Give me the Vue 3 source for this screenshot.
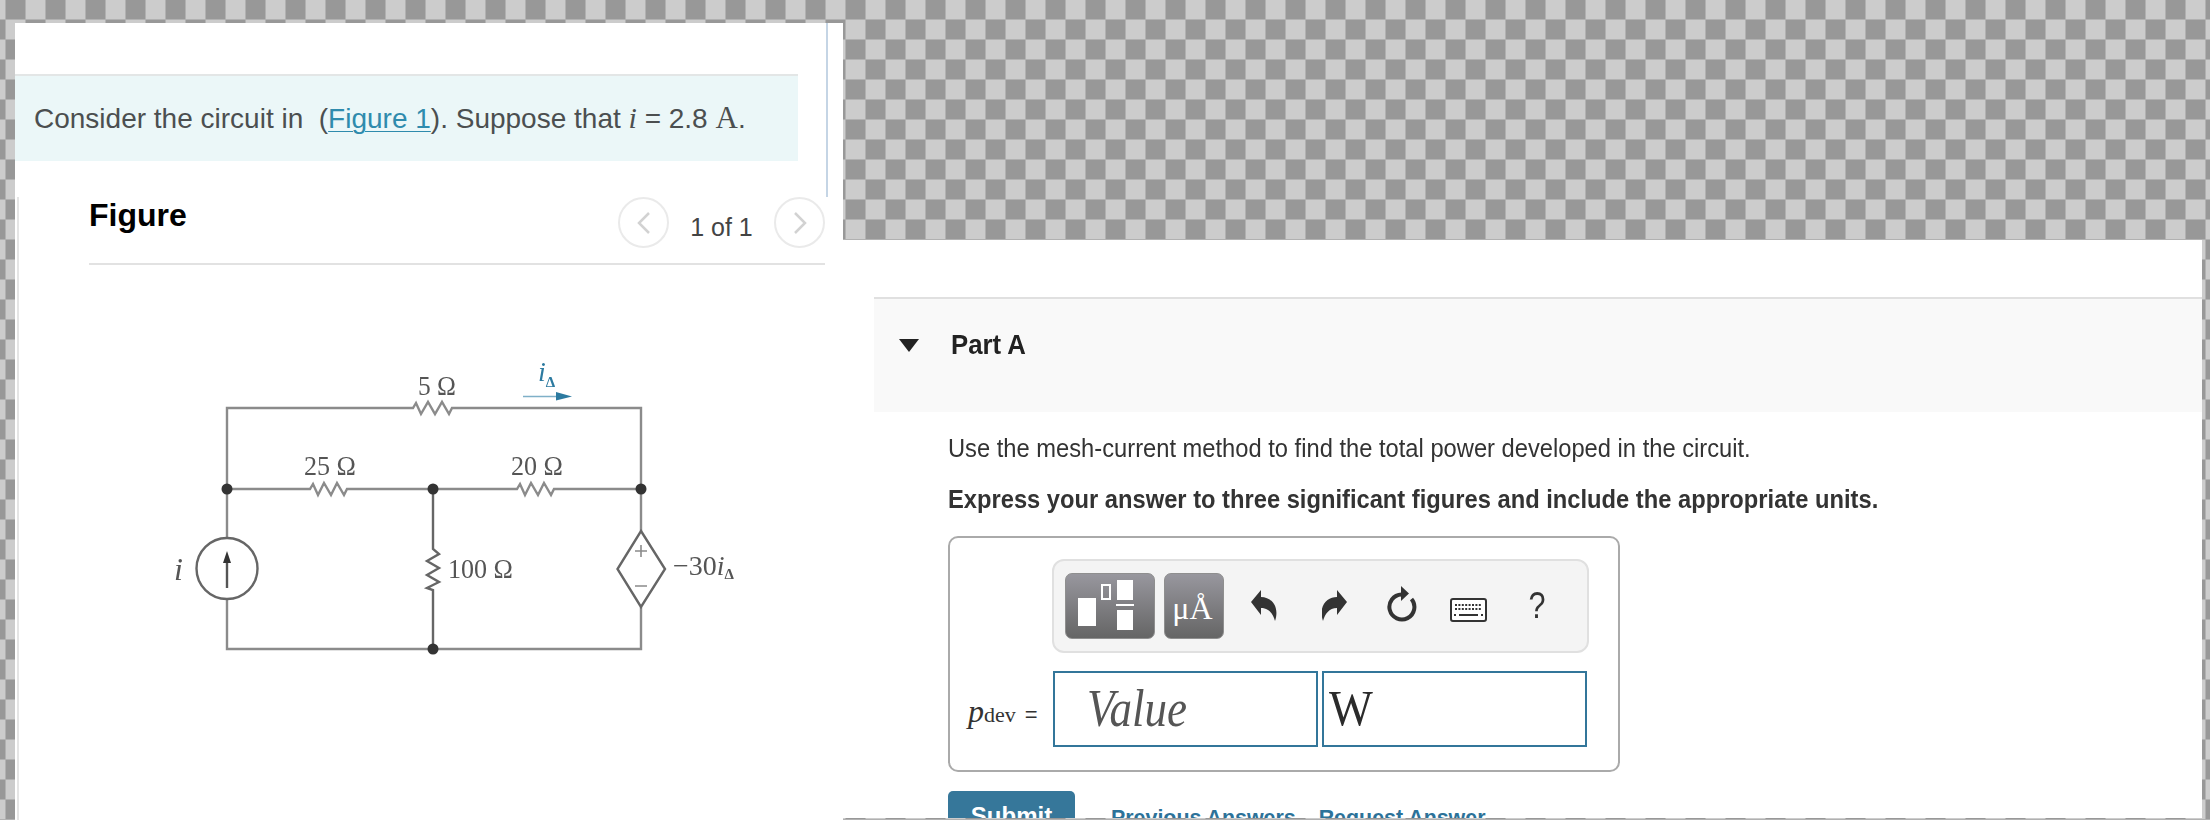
<template>
  <div class="canvas">
    <!-- problem statement -->
    <section class="sheet sheet-intro">
      <div class="intro-band">
        <p>
          Consider the circuit in&nbsp; (<a class="fig-link">Figure 1</a>). Suppose that
          <i class="math math-i">i</i> = 2.8 <span class="math math-a">A</span>.
        </p>
      </div>
    </section>

    <!-- figure -->
    <section class="sheet sheet-figure">
      <header class="fig-head">
        <h2>Figure</h2>
        <div class="pager">
          <span class="round-btn">
            <svg width="14" height="24" viewBox="0 0 14 24"><path d="M12 2 2 12l10 10" /></svg>
          </span>
          <span class="pager-text">1 of 1</span>
          <span class="round-btn">
            <svg width="14" height="24" viewBox="0 0 14 24"><path d="M2 2l10 10L2 22" /></svg>
          </span>
        </div>
      </header>
      <svg class="circuit" width="600" height="340" viewBox="140 340 600 340">
        <g fill="none" stroke="#8b8b8b" stroke-width="2.4">
          <path d="M227 538V408H413l3-5 5 11 7-12 7 12 7-12 7 12 3-6H641V531" />
          <path d="M227 489H310l3-5 5 11 6-12 7 12 6-12 7 12 3-6H517l3-5 5 11 6-12 7 12 6-12 7 12 3-6H641" />
          <path d="M433 489V549l6 5-12 7 12 7-12 7 12 7-12 6 6 2V649" stroke="#666" />
          <path d="M227 599V649H641V607" />
          <circle cx="227" cy="568.5" r="30.5" stroke="#666" />
          <path d="M641 531 665 569 641 607 617.500 569Z" stroke="#666" />
          <path d="M227 588V560" stroke="#555" />
          <path d="M635 551H647M641 545V557M635 586H647" stroke-width="1.6" />
        </g>
        <path d="M227 551l-4 12h8z" fill="#333" />
        <g fill="#333">
          <circle cx="227" cy="489" r="5.5" />
          <circle cx="433" cy="489" r="5.5" />
          <circle cx="641" cy="489" r="5.5" />
          <circle cx="433" cy="649" r="5.5" />
        </g>
        <g class="ckt-label">
          <text x="418" y="395" textLength="38" lengthAdjust="spacingAndGlyphs">5 Ω</text>
          <text x="304" y="475" textLength="52" lengthAdjust="spacingAndGlyphs">25 Ω</text>
          <text x="511" y="475" textLength="52" lengthAdjust="spacingAndGlyphs">20 Ω</text>
          <text x="448" y="578" textLength="65" lengthAdjust="spacingAndGlyphs">100 Ω</text>
          <text x="174" y="580" class="ckt-i">i</text>
          <text x="673" y="575">−30<tspan font-style="italic">i</tspan><tspan font-size="15" font-weight="bold" dy="4">Δ</tspan></text>
        </g>
        <text x="538" y="381" class="ckt-blue"><tspan font-style="italic">i</tspan><tspan font-size="15" font-weight="bold" dy="6">Δ</tspan></text>
        <path d="M523 396.500H560" stroke="#7fb0c8" stroke-width="1.6" />
        <path d="M556 392l16 4.500-16 4z" fill="#2c7aa0" />
      </svg>
    </section>

    <!-- part A -->
    <section class="sheet sheet-part">
      <div class="part-band">
        <span class="caret"></span>
        <h3>Part A</h3>
      </div>
      <div class="part-body">
        <p class="prompt">Use the mesh-current method to find the total power developed in the circuit.</p>
        <p class="prompt prompt-bold">Express your answer to three significant figures and include the appropriate units.</p>

        <div class="answer-box">
          <div class="toolbar">
            <button class="tool tool-wide">
              <svg width="90" height="66" viewBox="0 0 90 66">
                <rect x="13" y="25" width="18" height="28" fill="#fff" />
                <rect x="37" y="12" width="8" height="14" fill="none" stroke="#fff" stroke-width="2" />
                <rect x="52" y="7" width="16" height="20" fill="#fff" />
                <rect x="51" y="31" width="18" height="2" fill="#fff" />
                <rect x="52" y="37" width="16" height="20" fill="#fff" />
              </svg>
            </button>
            <button class="tool tool-unit">μÅ</button>
            <svg class="ico ico-undo" width="27" height="32" viewBox="0 0 27 32">
              <path d="M0 12 10 0V7C20 7 29 16 24 31 22 24 18 18 10 18V25Z" />
            </svg>
            <svg class="ico ico-redo" width="27" height="32" viewBox="0 0 27 32">
              <path d="M25 12 15 0V7C5 7-4 16 1 31 3 24 7 18 15 18V25Z" />
            </svg>
            <svg class="ico ico-reset" width="31" height="36" viewBox="0 0 31 36">
              <path d="M14.500 8.500A12.500 12.500 0 1 0 24.500 13" fill="none" stroke="#333" stroke-width="4" />
              <path d="M14 0 22 7.500 14 15Z" />
            </svg>
            <svg class="ico ico-keys" width="37" height="24" viewBox="0 0 37 24">
              <rect x="1" y="1" width="35" height="22" rx="2" fill="#fff" stroke="#333" stroke-width="2" />
              <path d="M5 7H31M5 11H31" stroke="#333" stroke-width="2" stroke-dasharray="2 1.400" />
              <path d="M9 17H28M4 17H6M31 17H33" stroke="#333" stroke-width="2" />
            </svg>
            <span class="ico-help">?</span>
          </div>
          <div class="input-row">
            <label class="eq-label"><i>p</i><span>dev</span><b>=</b></label>
            <div class="field"><span class="placeholder">Value</span></div>
            <div class="field field-unit"><span class="unit">W</span></div>
          </div>
        </div>

        <div class="actions">
          <button class="submit">Submit</button>
          <a>Previous Answers</a>
          <a>Request Answer</a>
        </div>
      </div>
    </section>
  </div>
</template>

<script setup>
</script>

<style>
html, body {
  margin: 0;
  background: #fff;
}
</style>

<style scoped>
.canvas {
  position: relative;
  width: 2210px;
  height: 820px;
  overflow: hidden;
  font-family: "Liberation Sans", Arial, sans-serif;
  color: #333;
  background:
    linear-gradient(90deg, #b1b1b1 1.5px, transparent 0) 5px 0 / 20px 20px,
    linear-gradient(#b1b1b1 1.5px, transparent 0) 0 -1px / 20px 20px,
    conic-gradient(#989898 25%, #cccccc 0 50%, #989898 0 75%, #cccccc 0) 26px 0 / 40px 40px;
}

.sheet {
  position: absolute;
  background: #fff;
  box-sizing: border-box;
}

.sheet-intro {
  left: 15px;
  top: 23px;
  width: 828px;
  height: 174px;
  padding-top: 51px;
}

.sheet-intro::after {
  content: "";
  position: absolute;
  left: 811px;
  top: 0;
  width: 2px;
  height: 174px;
  background: #c5d5e5;
}

.intro-band {
  width: 783px;
  height: 87px;
  box-sizing: border-box;
  border-top: 2px solid #e3e6e6;
  background: #ebf7f8;
  padding: 26px 0 0 19px;
  font-size: 28px;
  line-height: 34px;
  color: #4b4f50;
}

.intro-band p {
  margin: 0;
  white-space: nowrap;
}

.fig-link {
  color: #2f8bad;
  text-decoration: underline;
  text-underline-offset: 3px;
  text-decoration-thickness: 1px;
}

.math {
  font-family: "Liberation Serif", serif;
  line-height: 20px;
}

.math-i {
  font-size: 30px;
}

.math-a {
  font-size: 31px;
}

.sheet-figure {
  left: 15px;
  top: 197px;
  width: 828px;
  height: 623px;
  box-shadow: inset 2px 0 #fff, inset 4px 0 #e5e5e5;
}

.fig-head {
  display: flex;
  justify-content: space-between;
  align-items: flex-start;
  width: 736px;
  height: 66px;
  box-sizing: content-box;
  margin-left: 74px;
  border-bottom: 2px solid #e2e2e2;
}

.fig-head h2 {
  margin: 0;
  font-size: 32px;
  line-height: 36px;
  color: #000;
}

.pager {
  display: flex;
  align-items: flex-start;
}

.pager-text {
  width: 105px;
  padding-top: 16px;
  text-align: center;
  font-size: 25px;
  line-height: 28px;
  color: #444;
}

.round-btn {
  display: flex;
  align-items: center;
  justify-content: center;
  width: 51px;
  height: 51px;
  box-sizing: border-box;
  border: 2px solid #eaeaea;
  border-radius: 50%;
}

.round-btn path {
  fill: none;
  stroke: #d2d2d2;
  stroke-width: 2.5;
}

.circuit {
  display: block;
  margin: 75px 0 0 125px;
  filter: blur(0.7px);
}

.ckt-label text {
  font-family: "Liberation Serif", serif;
  font-size: 28px;
  fill: #555;
}

.ckt-label .ckt-i {
  font-style: italic;
  font-size: 32px;
}

.ckt-blue {
  font-family: "Liberation Serif", serif;
  font-size: 28px;
  fill: #2c7aa0;
}

.sheet-part {
  left: 843px;
  top: 240px;
  width: 1359px;
  height: 578px;
  overflow: hidden;
  padding-top: 57px;
}

.part-band {
  display: flex;
  align-items: flex-start;
  margin-left: 31px;
  height: 115px;
  box-sizing: border-box;
  padding: 31px 0 0 25px;
  border-top: 2px solid #e0e0e0;
  background: #f9f9f9;
}

.caret {
  width: 0;
  height: 0;
  margin: 9px 32px 0 0;
  border-left: 10px solid transparent;
  border-right: 10px solid transparent;
  border-top: 13px solid #222;
}

.part-band h3 {
  margin: 0;
  font-size: 28px;
  line-height: 30px;
  color: #222;
  transform: scaleX(0.92);
  transform-origin: left;
}

.part-body {
  padding: 21px 0 0 105px;
}

.prompt {
  margin: 0 0 21px;
  font-size: 26px;
  line-height: 30px;
  color: #333;
  white-space: nowrap;
  transform: scaleX(0.912);
  transform-origin: left;
}

.prompt-bold {
  font-weight: bold;
  margin-bottom: 22px;
}

.answer-box {
  width: 672px;
  height: 236px;
  box-sizing: border-box;
  padding: 21px 0 0 102px;
  border: 2px solid #aaa;
  border-radius: 10px;
  position: relative;
}

.toolbar {
  display: flex;
  align-items: center;
  width: 537px;
  height: 94px;
  box-sizing: border-box;
  padding-left: 11px;
  background: #f4f4f4;
  border: 2px solid #e0e0e0;
  border-radius: 12px;
}

.tool {
  height: 66px;
  padding: 0;
  border: 1px solid #8f8f8f;
  border-radius: 7px;
  background: linear-gradient(#98979e, #656565);
  color: #fff;
}

.tool svg {
  display: block;
  margin: -1px;
}

.tool-wide {
  width: 90px;
  margin-right: 9px;
}

.tool-unit {
  width: 60px;
  padding: 4px 3px 0 0;
  font-family: "Liberation Serif", serif;
  font-size: 32px;
}

.ico {
  flex: none;
  fill: #333;
}

.ico-undo {
  margin: 0 0 0 27px;
}

.ico-redo {
  margin: 0 0 0 44px;
}

.ico-reset {
  margin: -4px 0 0 38px;
}

.ico-keys {
  margin: 8px 0 0 32px;
}

.ico-help {
  margin: 0 0 0 40px;
  font-size: 36px;
  color: #333;
  transform: scaleX(0.85);
}

.input-row {
  display: flex;
  align-items: stretch;
  height: 76px;
  margin: 18px 0 0 1px;
}

.eq-label {
  position: absolute;
  left: 18px;
  top: 155px;
  font-family: "Liberation Serif", serif;
  font-size: 22px;
  color: #333;
  white-space: nowrap;
}

.eq-label i {
  font-size: 32px;
}

.eq-label b {
  margin-left: 9px;
  font-family: "Liberation Sans", sans-serif;
  font-weight: normal;
}

.field {
  width: 265px;
  margin-right: 4px;
  box-sizing: border-box;
  border: 2px solid #33769a;
  font-family: "Liberation Serif", serif;
  line-height: 70px;
}

.placeholder {
  display: inline-block;
  margin-left: 32px;
  font-size: 53px;
  font-style: italic;
  color: #555;
  transform: scaleX(0.85);
  transform-origin: left;
}

.unit {
  display: inline-block;
  margin-left: 5px;
  font-size: 50px;
  color: #2b2b2b;
  transform: scaleX(0.93);
  transform-origin: left;
}

.actions {
  display: flex;
  align-items: flex-start;
  gap: 23px;
  margin-top: 19px;
}

.submit {
  width: 127px;
  height: 50px;
  margin-right: 13px;
  padding: 0;
  border: 0;
  border-radius: 5px;
  background: #36779a;
  color: #fff;
  font-family: inherit;
  font-size: 24px;
  font-weight: bold;
}

.actions a {
  margin-top: 15px;
  font-size: 21.4px;
  font-weight: bold;
  color: #2c7299;
}
</style>
